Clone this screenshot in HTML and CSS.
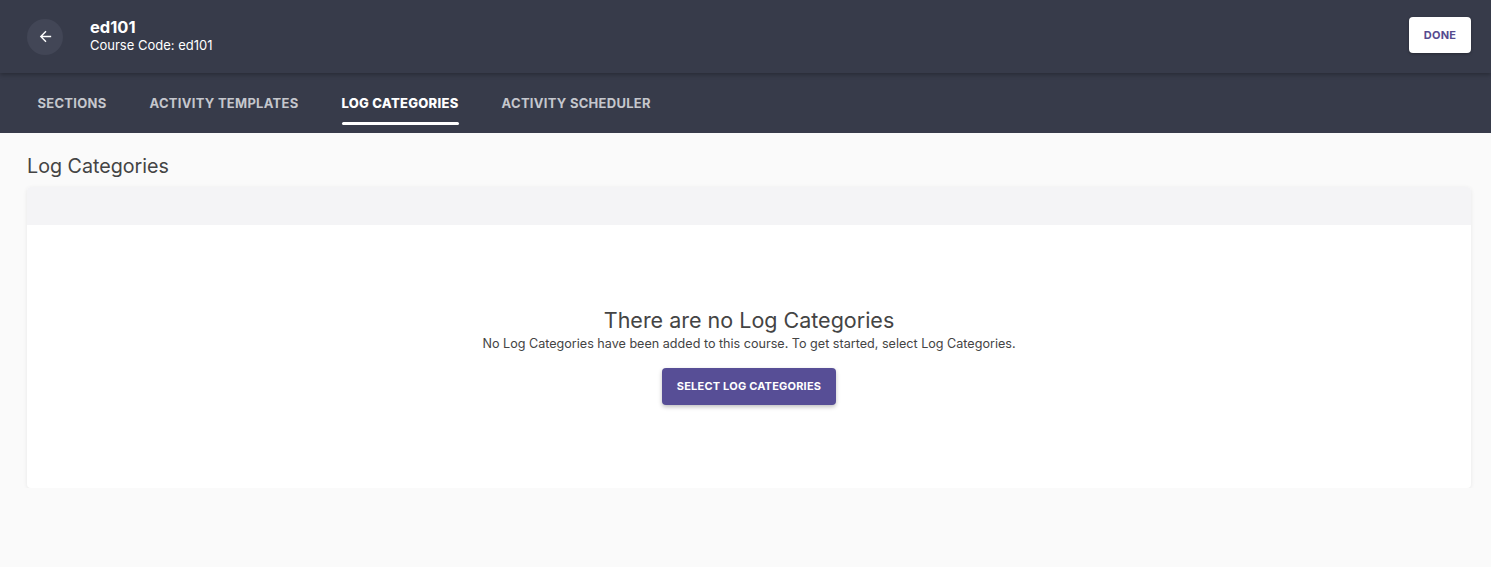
FILE: index.html
```html
<!DOCTYPE html>
<html lang="en">
<head>
    <meta charset="UTF-8">
    <title>ed101 - Log Categories</title>
    <link rel="stylesheet" href="styles.css">
</head>
<body>
    <div class="topbar">
        <div class="course">
            <div class="backBtn">
                <svg width="17" height="17" viewBox="0 0 24 24"><path d="M20 11H7.83l5.59-5.59L12 4l-8 8 8 8 1.41-1.41L7.83 13H20v-2z" fill="#fff"/></svg>
            </div>
            <div class="courseInfo">
                <div class="courseName">ed101</div>
                <div class="courseCode">Course Code: ed101</div>
            </div>
        </div>
        <div class="doneBtn">DONE</div>
    </div>
    <ul class="tabs">
        <li>SECTIONS</li>
        <li>ACTIVITY TEMPLATES</li>
        <li class="active">LOG CATEGORIES</li>
        <li>ACTIVITY SCHEDULER</li>
    </ul>
    <div class="content">
        <h2 class="pageTitle">Log Categories</h2>
        <div class="card">
            <div class="cardHead"></div>
            <div class="empty">
                <div class="emptyTitle">There are no Log Categories</div>
                <div class="emptyText">No Log Categories have been added to this course. To get started, select Log Categories.</div>
                <div class="selectBtn">SELECT LOG CATEGORIES</div>
            </div>
        </div>
    </div>
</body>
</html>
```

FILE: styles.css
```css
* {
    padding: 0;
    margin: 0;
    list-style: none;
    box-sizing: border-box;
}

body {
    font-family: Inter, "Noto Sans", sans-serif;
    background-color: #fafafa;
    color: #444;
}

.topbar {
    height: 73px;
    background-color: #373b4a;
    display: flex;
    align-items: center;
    justify-content: space-between;
    padding: 0 20px 0 27px;
    position: relative;
    z-index: 1;
    box-shadow: 0 2px 4px rgba(0, 0, 0, 0.25);
}

.course {
    display: flex;
    align-items: center;
}

.backBtn {
    width: 36px;
    height: 36px;
    border-radius: 50%;
    background-color: #424656;
    display: flex;
    align-items: center;
    justify-content: center;
    margin-right: 27px;
}

.courseInfo {
    margin-bottom: 3px;
}

.courseName {
    color: #fff;
    font-size: 16.5px;
    font-weight: 700;
    line-height: 20px;
}

.courseCode {
    color: #fff;
    font-size: 13px;
    line-height: 17px;
}

.doneBtn {
    width: 62px;
    height: 36px;
    margin-bottom: 3px;
    background-color: #fff;
    border-radius: 4px;
    color: #564b8f;
    font-size: 11px;
    font-weight: 700;
    text-align: center;
    line-height: 36px;
    letter-spacing: 0.3px;
    box-shadow: 0 1px 3px rgba(0, 0, 0, 0.3);
}

.tabs {
    height: 60px;
    background-color: #373b4a;
    display: flex;
    padding-left: 16px;
}

.tabs li {
    padding: 0 21.5px;
    font-size: 13px;
    font-weight: 700;
    color: #c5c7cd;
    line-height: 60px;
    position: relative;
    letter-spacing: 0.28px;
}

.tabs .active {
    color: #fff;
    font-weight: 800;
}

.tabs .active::after {
    content: "";
    position: absolute;
    left: 21.5px;
    right: 21.5px;
    bottom: 8px;
    height: 3px;
    background-color: #fff;
    border-radius: 2px;
}

.content {
    padding: 21px 20px 0 27px;
}

.pageTitle {
    font-size: 19.7px;
    font-weight: 400;
    color: #444;
    line-height: 24px;
    margin-bottom: 9px;
}

.card {
    background-color: #fff;
    border-radius: 4px;
    box-shadow: 0 1px 4px rgba(0, 0, 0, 0.08);
    overflow: hidden;
}

.cardHead {
    height: 38px;
    background-color: #f4f4f6;
}

.empty {
    height: 263px;
    display: flex;
    flex-direction: column;
    align-items: center;
    padding-top: 80px;
}

.emptyTitle {
    font-size: 21.5px;
    line-height: 30px;
    color: #444;
}

.emptyText {
    font-size: 12.6px;
    line-height: 17px;
    color: #444;
    margin-bottom: 16px;
}

.selectBtn {
    height: 37px;
    padding: 0 15px;
    background-color: #574e96;
    border-radius: 4px;
    color: #fff;
    font-size: 11px;
    font-weight: 700;
    line-height: 37px;
    letter-spacing: 0.2px;
    box-shadow: 0 2px 4px rgba(0, 0, 0, 0.25);
}
```
